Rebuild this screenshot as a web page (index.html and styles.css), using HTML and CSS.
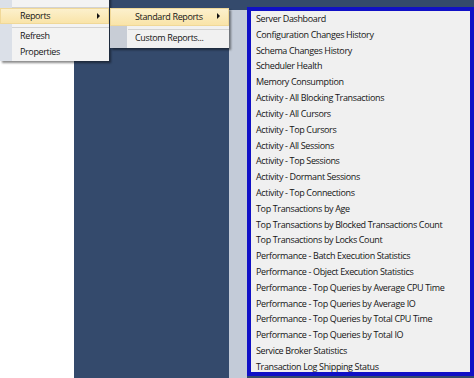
FILE: index.html
```html
<!DOCTYPE html>
<html>
<head>
    <title>Reports menu</title>
    <link rel="stylesheet" href="styles.css">
</head>
<body>
    <div class="screen">
        <div class="pane-white"></div>
        <div class="pane-navy">
            <div class="strip"></div>
        </div>

        <div class="menu menu-main">
            <div class="item item-top"></div>
            <div class="sep"></div>
            <div class="item active">Reports<span class="arrow"></span></div>
            <div class="sep"></div>
            <div class="item">Refresh</div>
            <div class="item">Properties</div>
        </div>

        <div class="menu menu-sub">
            <div class="item active">Standard Reports<span class="arrow"></span></div>
            <div class="sep"></div>
            <div class="item">Custom Reports...</div>
        </div>

        <div class="menu menu-reports">
            <div class="report">Server Dashboard</div>
            <div class="report">Configuration Changes History</div>
            <div class="report">Schema Changes History</div>
            <div class="report">Scheduler Health</div>
            <div class="report">Memory Consumption</div>
            <div class="report">Activity - All Blocking Transactions</div>
            <div class="report">Activity - All Cursors</div>
            <div class="report">Activity - Top Cursors</div>
            <div class="report">Activity - All Sessions</div>
            <div class="report">Activity - Top Sessions</div>
            <div class="report">Activity - Dormant Sessions</div>
            <div class="report">Activity - Top Connections</div>
            <div class="report">Top Transactions by Age</div>
            <div class="report">Top Transactions by Blocked Transactions Count</div>
            <div class="report">Top Transactions by Locks Count</div>
            <div class="report">Performance - Batch Execution Statistics</div>
            <div class="report">Performance - Object Execution Statistics</div>
            <div class="report">Performance - Top Queries by Average CPU Time</div>
            <div class="report">Performance - Top Queries by Average IO</div>
            <div class="report">Performance - Top Queries by Total CPU Time</div>
            <div class="report">Performance - Top Queries by Total IO</div>
            <div class="report">Service Broker Statistics</div>
            <div class="report">Transaction Log Shipping Status</div>
        </div>
    </div>
</body>
</html>
```

FILE: styles.css
```css
body {
    margin: 0;
    font-family: "Open Sans", "Noto Sans", sans-serif;
    font-size: 9px;
    letter-spacing: -0.36px;
    color: #151515;
}
.screen {
    position: relative;
    width: 474px;
    height: 378px;
    overflow: hidden;
    display: flex;
}
.pane-white {
    width: 74px;
    background: #ffffff;
}
.pane-navy {
    flex: 1;
    display: flex;
    padding: 10px 0 0 155px;
    background: #344a6c;
}
.strip {
    width: 18px;
    background: #c3cbd8;
}

/* popup menus */
.menu {
    position: absolute;
    background: #f1f1f1;
    box-shadow: 2px 2px 2px rgba(0,0,0,0.45);
}
.item {
    position: relative;
    height: 16px;
    line-height: 16px;
    padding-left: 20px;
}
.item.active {
    background: linear-gradient(#fcf1cf, #f9e3a6);
    box-shadow: inset 0 0 0 1px #f0d898;
}
.sep {
    height: 4px;
    border-bottom: 1px solid #d2d2d2;
    box-sizing: border-box;
    margin-left: 12px;
}
.arrow {
    position: absolute;
    top: 5px;
    right: 9px;
    border-left: 3px solid #111;
    border-top: 3px solid transparent;
    border-bottom: 3px solid transparent;
}

.menu-main {
    left: 0;
    top: -12px;
    width: 109px;
    height: 73px;
    background: linear-gradient(to right, #dbe0e8 12px, #f3f3f3 12px);
}
.menu-main .item-top {
    height: 16px;
}

.menu-sub {
    left: 110px;
    top: 8px;
    width: 119px;
    height: 40px;
    background: linear-gradient(to right, #c8cdd6 17px, #f1f1f1 17px);
}
.menu-sub .item {
    padding-left: 25px;
}
.menu-sub .item.active {
    height: 18px;
    line-height: 18px;
}
.menu-sub .sep {
    margin-left: 18px;
}

.menu-reports {
    left: 247px;
    top: 7px;
    right: 0;
    height: 361px;
    border: 4px solid #1010c6;
    box-shadow: none;
    background: #f0f0f0;
    padding: 0 0 0 5px;
}
.report {
    height: 15.82px;
    line-height: 15.82px;
    white-space: nowrap;
}
```
